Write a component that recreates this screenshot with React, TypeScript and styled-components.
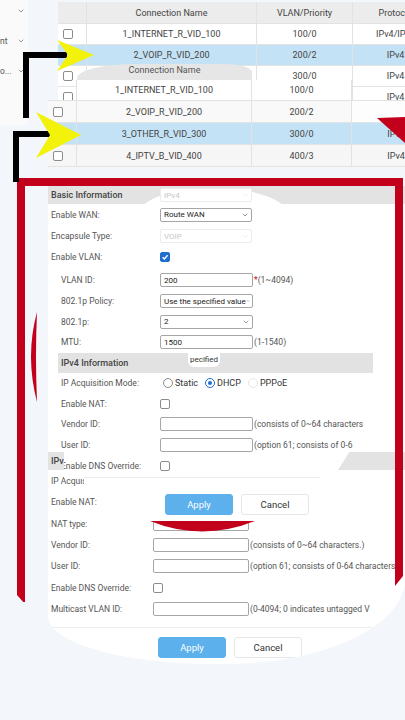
import React from "react";
import styled, { createGlobalStyle } from "styled-components";
import { ChevronDown } from "lucide-react";

const FONT = `Roboto, "Noto Sans", "Liberation Sans", sans-serif`;

const Global = createGlobalStyle`
  *, *::before, *::after { box-sizing: border-box; }
  html, body { margin: 0; padding: 0; background: #f3f6fa; }
  body { font-family: ${FONT}; }
`;

const Screen = styled.div`
  position: relative;
  width: 405px;
  height: 720px;
  overflow: hidden;
  background: #f3f6fa;
  font-family: ${FONT};
  color: #555;
  display: flex;
  flex-direction: column;
`;

/* ---------- top area ---------- */
const TopArea = styled.div`
  display: flex;
  height: 178px;
  flex-shrink: 0;
`;

const Sidebar = styled.nav`
  width: 28px;
  height: 125px;
  background: #fafafa;
  display: flex;
  flex-direction: column;
  gap: 8px;
  flex-shrink: 0;
`;

const SideItem = styled.div`
  height: 22px;
  display: flex;
  align-items: center;
  justify-content: space-between;
  padding-right: 3px;
  font-size: 8.5px;
  color: #555;
  white-space: nowrap;
`;

const TableWrap = styled.div`
  margin: 2px 0 0 30px;
  width: 380px;
  flex-shrink: 0;
`;

const TRow = styled.div<{ $cols: string; $h: number; $bg?: string; $open?: boolean }>`
  display: grid;
  grid-template-columns: ${(p) => p.$cols};
  height: ${(p) => p.$h}px;
  background: ${(p) => p.$bg ?? "transparent"};
  border-bottom: ${(p) => (p.$open ? "none" : "1px solid #e3e3e3")};
`;

const TCell = styled.div<{ $bg?: string; $start?: boolean; $round?: string; $last?: boolean }>`
  display: flex;
  align-items: center;
  justify-content: ${(p) => (p.$start ? "flex-start" : "center")};
  padding-left: ${(p) => (p.$start ? "5px" : "0")};
  font-size: 9px;
  color: #444;
  white-space: nowrap;
  overflow: hidden;
  border-right: ${(p) => (p.$last ? "none" : "1px solid #e2e2e2")};
  background: ${(p) => p.$bg ?? "transparent"};
  border-radius: ${(p) => p.$round ?? "0"};
`;

const HeadCell = styled(TCell)`
  align-items: flex-start;
  padding-top: 1px;
  color: #555;
  border-right: none;
`;

const Box = styled.span<{ $on?: boolean }>`
  display: inline-flex;
  align-items: center;
  justify-content: center;
  width: 10px;
  height: 10px;
  border-radius: 2px;
  border: 1px solid ${(p) => (p.$on ? "#1f6fd0" : "#8c8c8c")};
  background: ${(p) => (p.$on ? "#1f6fd0" : "#fff")};
  flex-shrink: 0;
`;

/* ---------- zoomed table overlay ---------- */
const ZoomTable = styled.div`
  position: absolute;
  top: 64px;
  left: 48px;
  width: 392px;
  z-index: 2;
`;

/* ---------- framed form ---------- */
const FrameSection = styled.section`
  position: relative;
  margin-left: 17px;
  padding: 8px 0 0 31px;
`;

const RedFrame = styled.div`
  position: absolute;
  top: 0;
  left: 0;
  width: 386px;
  height: 424px;
  border: 8px solid #c3001c;
  border-bottom: none;
  clip-path: polygon(0 0, 100% 0, 100% 398px, calc(100% - 8px) 408px, 8px 426px, 0 417px);
  z-index: 1;
  pointer-events: none;
`;

const Panel = styled.div`
  width: 357px;
  background: #fff;
  overflow: hidden;
  border-radius: 0 0 180px 165px / 0 0 85px 48px;
`;

const SectionHead = styled.div<{ $ctrl: number; $dome?: boolean }>`
  position: relative;
  display: grid;
  grid-template-columns: ${(p) => p.$ctrl}px auto;
  align-items: center;
  height: 18px;
  padding-left: 3px;
  background: #e3e3e3;
  overflow: hidden;
  font-size: 9px;
  color: #444;
  font-weight: 500;
  & > * { position: relative; z-index: 1; }
  &::after {
    content: "";
    display: ${(p) => (p.$dome ? "block" : "none")};
    position: absolute;
    left: 90px;
    top: 2px;
    width: 150px;
    height: 54px;
    border-radius: 50%;
    background: #fff;
  }
`;

const FormRow = styled.div<{ $ctrl: number; $h: number }>`
  display: grid;
  grid-template-columns: ${(p) => p.$ctrl}px auto;
  align-items: center;
  height: ${(p) => p.$h}px;
  padding-left: 3px;
  font-size: 8.5px;
  color: #555;
  white-space: nowrap;
`;

const Label = styled.span`
  overflow: hidden;
`;

const Ctrl = styled.div`
  display: flex;
  align-items: center;
  white-space: nowrap;
  overflow: hidden;
`;

const Field = styled.div<{ $w: number; $muted?: boolean }>`
  width: ${(p) => p.$w}px;
  height: 14px;
  flex-shrink: 0;
  border: 1px solid ${(p) => (p.$muted ? "#ececec" : "#a6a6a6")};
  border-radius: 2px;
  background: #fff;
  display: flex;
  align-items: center;
  justify-content: space-between;
  padding: 0 2px 0 3px;
  font-size: 8px;
  color: ${(p) => (p.$muted ? "#c6c6c6" : "#222")};
  font-weight: 400;
  white-space: nowrap;
  overflow: hidden;
`;

const Hint = styled.span`
  font-size: 8.5px;
  color: #555;
  margin-left: 1px;
`;

const Star = styled.span`
  color: #d0021b;
`;

const Spacer = styled.div<{ $h: number }>`
  height: ${(p) => p.$h}px;
`;

const Footer = styled.div<{ $pad: number }>`
  margin-top: 7px;
  border-top: 1px solid #eeeeee;
  padding: 9px 0 6px ${(p) => p.$pad}px;
  display: flex;
  gap: 8px;
`;

const Btn = styled.div<{ $primary?: boolean }>`
  width: 68px;
  height: 21px;
  border-radius: 3px;
  display: flex;
  align-items: center;
  justify-content: center;
  font-size: 9.5px;
  background: ${(p) => (p.$primary ? "#5cb0ec" : "#fff")};
  color: ${(p) => (p.$primary ? "#fff" : "#333")};
  border: 1px solid ${(p) => (p.$primary ? "#5cb0ec" : "#e6e6e6")};
`;

/* ---------- zoomed form overlay ---------- */
const ZoomForm = styled.div`
  position: absolute;
  top: 270px;
  left: 58px;
  width: 315px;
  height: 208px;
  background: #fff;
  z-index: 2;
  clip-path: polygon(0 0, 100% 0, 100% 180px, 292px 181px, 275px 208px, 6px 208px, 6px 182px, 0 182px);
`;

const ZoomHead = styled.div`
  position: relative;
  height: 20px;
  display: flex;
  align-items: center;
  padding-left: 3px;
  background: #e2e2e2;
  font-size: 9px;
  font-weight: 500;
  color: #444;
`;

const Chip = styled.span`
  position: absolute;
  left: 130px;
  top: 0;
  height: 14px;
  padding: 0 2px;
  background: #fff;
  border-radius: 0 0 6px 6px;
  font-size: 8px;
  font-weight: 400;
  color: #333;
  display: flex;
  align-items: center;
`;

const RadioGroup = styled.div`
  display: flex;
  align-items: center;
  gap: 2px;
  font-size: 9px;
  color: #333;
`;

const Radio = styled.span<{ $on?: boolean; $faded?: boolean }>`
  position: relative;
  display: inline-block;
  width: 10px;
  height: 10px;
  border-radius: 50%;
  margin-left: ${(p) => (p.$on || p.$faded ? "5px" : "3px")};
  border: 1px solid ${(p) => (p.$on ? "#1f6fd0" : p.$faded ? "#e6e6e6" : "#8c8c8c")};
  &::after {
    content: "";
    display: ${(p) => (p.$on ? "block" : "none")};
    position: absolute;
    inset: 2px;
    border-radius: 50%;
    background: #1f6fd0;
  }
`;

const ZoomActions = styled.div`
  position: absolute;
  top: 477px;
  left: 84px;
  width: 236px;
  height: 45px;
  background: #fff;
  border-top: 1px solid #ececec;
  z-index: 2;
  display: flex;
  gap: 8px;
  padding: 16px 0 0 81px;
  clip-path: polygon(0 0, 100% 0, 100% 100%, 16px 100%, 16px 16px, 0 16px);
`;

const Annotations = styled.svg`
  position: absolute;
  inset: 0;
  width: 405px;
  height: 720px;
  z-index: 5;
  pointer-events: none;
`;

const Tick = () => (
  <svg width="8" height="8" viewBox="0 0 10 10">
    <path d="M2 5.2 L4.2 7.4 L8.2 2.8" stroke="#fff" strokeWidth="1.8" fill="none" />
  </svg>
);

const Chev = () => <ChevronDown size={8} strokeWidth={2} color="#666" />;

const TOP_COLS = "29px 170px 96px 85px";
const ZOOM_COLS = "29px 175px 100px 88px";

const topRows = [
  { name: "1_INTERNET_R_VID_100", vlan: "100/0", proto: "IPv4/IPv6" },
  { name: "2_VOIP_R_VID_200", vlan: "200/2", proto: "IPv4", sel: true },
  { name: "3_OTHER_R_VID_300", vlan: "300/0", proto: "IPv4" },
  { name: "4_IPTV_B_VID_400", vlan: "400/3", proto: "IPv4" },
];

const RH = 21.4;
const ZH = 20.7;

export default function App() {
  return (
    <>
      <Global />
      <Screen>
        <TopArea>
          <Sidebar>
            <SideItem>
              <span />
              <Chev />
            </SideItem>
            <SideItem>
              <span>nt</span>
              <Chev />
            </SideItem>
            <SideItem>
              <span>o...</span>
              <Chev />
            </SideItem>
          </Sidebar>
          <TableWrap>
            <TRow $cols={TOP_COLS} $h={22} $bg="#ececec">
              <TCell />
              <TCell>Connection Name</TCell>
              <TCell>VLAN/Priority</TCell>
              <TCell $last>Protocol</TCell>
            </TRow>
            {topRows.map((r) => (
              <TRow key={r.name} $cols={TOP_COLS} $h={21} $bg={r.sel ? "#c4e2f5" : "#fff"}>
                <TCell $start>{!r.sel && <Box />}</TCell>
                <TCell>{r.name}</TCell>
                <TCell>{r.vlan}</TCell>
                <TCell $last>{r.proto}</TCell>
              </TRow>
            ))}
          </TableWrap>
        </TopArea>

        <FrameSection>
          <RedFrame />
          <Panel>
            <SectionHead $ctrl={109} $dome>
              <span>Basic Information</span>
              <Field $w={92} $muted>
                IPv4 <ChevronDown size={7} color="#ddd" />
              </Field>
            </SectionHead>
            <FormRow $ctrl={109} $h={RH}>
              <Label>Enable WAN:</Label>
              <Ctrl>
                <Field $w={92}>
                  Route WAN <Chev />
                </Field>
              </Ctrl>
            </FormRow>
            <FormRow $ctrl={109} $h={RH}>
              <Label>Encapsule Type:</Label>
              <Ctrl>
                <Field $w={92} $muted>
                  VOIP <ChevronDown size={7} color="#ddd" />
                </Field>
              </Ctrl>
            </FormRow>
            <FormRow $ctrl={109} $h={RH}>
              <Label>Enable VLAN:</Label>
              <Ctrl>
                <Box $on>
                  <Tick />
                </Box>
              </Ctrl>
            </FormRow>
            <Spacer $h={184} />
            <SectionHead $ctrl={102}>
              <span>IPv4 Information</span>
            </SectionHead>
            <FormRow $ctrl={102} $h={RH}>
              <Label>IP Acquisition Mode:</Label>
              <Ctrl />
            </FormRow>
            <FormRow $ctrl={102} $h={RH}>
              <Label>Enable NAT:</Label>
              <Ctrl />
            </FormRow>
            <FormRow $ctrl={102} $h={RH}>
              <Label>NAT type:</Label>
              <Ctrl>
                <Field $w={96} />
              </Ctrl>
            </FormRow>
            <FormRow $ctrl={102} $h={RH}>
              <Label>Vendor ID:</Label>
              <Ctrl>
                <Field $w={96} />
                <Hint>(consists of 0~64 characters.)</Hint>
              </Ctrl>
            </FormRow>
            <FormRow $ctrl={102} $h={RH}>
              <Label>User ID:</Label>
              <Ctrl>
                <Field $w={96} />
                <Hint>(option 61; consists of 0-64 characters)</Hint>
              </Ctrl>
            </FormRow>
            <FormRow $ctrl={102} $h={RH}>
              <Label>Enable DNS Override:</Label>
              <Ctrl>
                <Box />
              </Ctrl>
            </FormRow>
            <FormRow $ctrl={102} $h={RH}>
              <Label>Multicast VLAN ID:</Label>
              <Ctrl>
                <Field $w={96} />
                <Hint>(0-4094; 0 indicates untagged V</Hint>
              </Ctrl>
            </FormRow>
            <Footer $pad={110}>
              <Btn $primary>Apply</Btn>
              <Btn>Cancel</Btn>
            </Footer>
          </Panel>
        </FrameSection>

        <ZoomTable>
          <TRow $cols={ZOOM_COLS} $h={16} $open>
            <HeadCell />
            <HeadCell $bg="#e6e6e6" $round="60px 30px 0 0 / 14px 8px 0 0">
              Connection Name
            </HeadCell>
            <HeadCell />
            <HeadCell />
          </TRow>
          <TRow $cols={ZOOM_COLS} $h={21}>
            <TCell />
            <TCell $bg="#fff">1_INTERNET_R_VID_100</TCell>
            <TCell $bg="#fff">100/0</TCell>
            <TCell $last />
          </TRow>
          <TRow $cols={ZOOM_COLS} $h={22} $bg="#f9f9f9">
            <TCell $start>
              <Box />
            </TCell>
            <TCell>2_VOIP_R_VID_200</TCell>
            <TCell>200/2</TCell>
            <TCell $last $bg="rgba(255,255,255,0.7)" />
          </TRow>
          <TRow $cols={ZOOM_COLS} $h={22} $bg="#c4e2f5">
            <TCell $start />
            <TCell>3_OTHER_R_VID_300</TCell>
            <TCell>300/0</TCell>
            <TCell $last>IPv4</TCell>
          </TRow>
          <TRow $cols={ZOOM_COLS} $h={22} $bg="#f6f6f6">
            <TCell $start>
              <Box />
            </TCell>
            <TCell>4_IPTV_B_VID_400</TCell>
            <TCell>400/3</TCell>
            <TCell $last>IPv4</TCell>
          </TRow>
        </ZoomTable>

        <ZoomForm>
          <FormRow $ctrl={99} $h={ZH}>
            <Label>VLAN ID:</Label>
            <Ctrl>
              <Field $w={93}>200</Field>
              <Hint>
                <Star>*</Star>(1~4094)
              </Hint>
            </Ctrl>
          </FormRow>
          <FormRow $ctrl={99} $h={ZH}>
            <Label>802.1p Policy:</Label>
            <Ctrl>
              <Field $w={93}>
                Use the specified value <Chev />
              </Field>
            </Ctrl>
          </FormRow>
          <FormRow $ctrl={99} $h={ZH}>
            <Label>802.1p:</Label>
            <Ctrl>
              <Field $w={93}>
                2 <Chev />
              </Field>
            </Ctrl>
          </FormRow>
          <FormRow $ctrl={99} $h={ZH}>
            <Label>MTU:</Label>
            <Ctrl>
              <Field $w={93}>1500</Field>
              <Hint>(1-1540)</Hint>
            </Ctrl>
          </FormRow>
          <ZoomHead>
            IPv4 Information
            <Chip>pecified</Chip>
          </ZoomHead>
          <FormRow $ctrl={99} $h={ZH}>
            <Label>IP Acquisition Mode:</Label>
            <RadioGroup>
              <Radio />
              <span>Static</span>
              <Radio $on />
              <span>DHCP</span>
              <Radio $faded />
              <span>PPPoE</span>
            </RadioGroup>
          </FormRow>
          <FormRow $ctrl={99} $h={ZH}>
            <Label>Enable NAT:</Label>
            <Ctrl>
              <Box />
            </Ctrl>
          </FormRow>
          <FormRow $ctrl={99} $h={ZH}>
            <Label>Vendor ID:</Label>
            <Ctrl>
              <Field $w={93} />
              <Hint>(consists of 0~64 characters</Hint>
            </Ctrl>
          </FormRow>
          <FormRow $ctrl={99} $h={ZH}>
            <Label>User ID:</Label>
            <Ctrl>
              <Field $w={93} />
              <Hint>(option 61; consists of 0-6</Hint>
            </Ctrl>
          </FormRow>
          <FormRow $ctrl={99} $h={ZH}>
            <Label>Enable DNS Override:</Label>
            <Ctrl>
              <Box />
            </Ctrl>
          </FormRow>
        </ZoomForm>

        <ZoomActions>
          <Btn $primary>Apply</Btn>
          <Btn>Cancel</Btn>
        </ZoomActions>

        <Annotations viewBox="0 0 405 720">
          <path d="M37 312 Q25 356 37 402 Q35 356 37 312 Z" fill="#c3001c" />
          <path d="M150 521 Q202 542 255 521 Z" fill="#c3001c" />
          <path d="M377 118 L405 117 L405 143 Z" fill="#c3001c" />
          <path d="M26 118 L26 55 L67 55" stroke="#000" strokeWidth="6" fill="none" />
          <polygon points="57,40 94,55 57,71 68,55" fill="#f2f20a" />
          <path d="M16 182 L16 134 L52 134" stroke="#000" strokeWidth="6" fill="none" />
          <polygon points="36,112 81,135 36,158 50,135" fill="#f2f20a" />
        </Annotations>
      </Screen>
    </>
  );
}
